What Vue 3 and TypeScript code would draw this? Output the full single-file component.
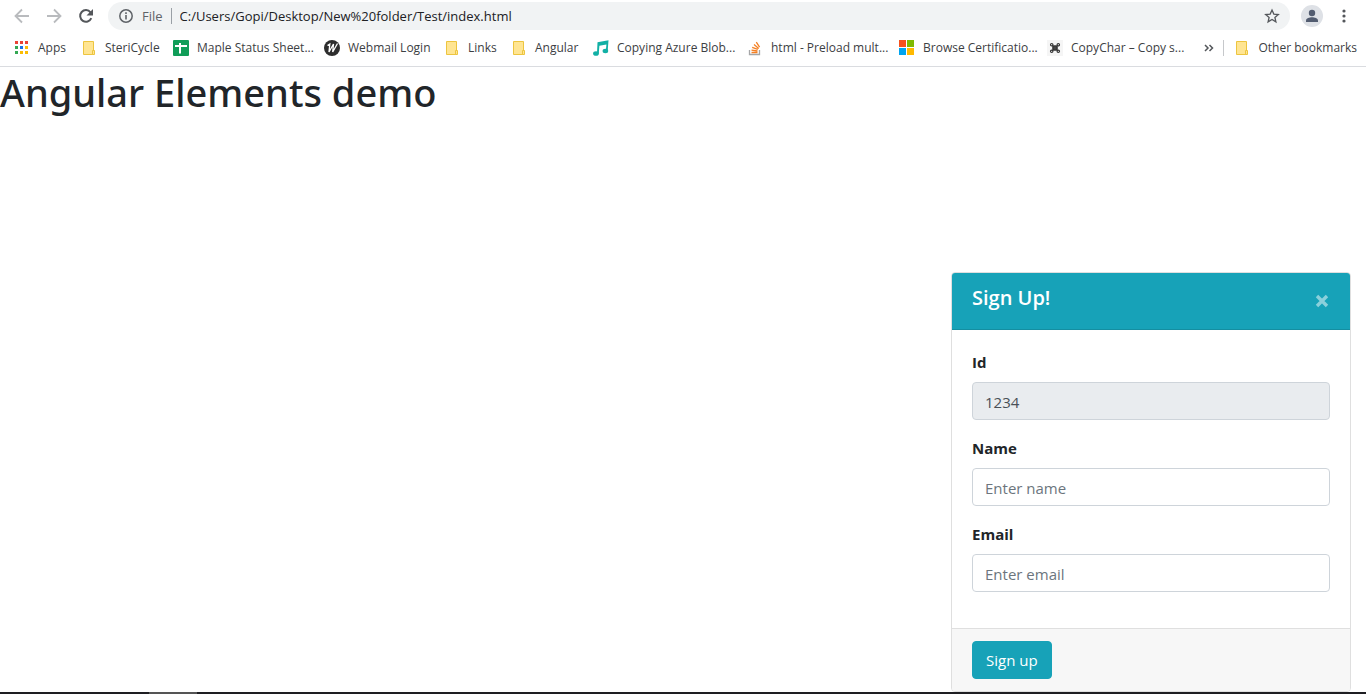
<script setup lang="ts">
import { ref } from 'vue'

type IconName = 'apps' | 'folder' | 'sheet' | 'webmail' | 'music' | 'stack' | 'windows' | 'command'

interface Bookmark {
  icon: IconName
  label: string
}

const bookmarks: Bookmark[] = [
  { icon: 'apps', label: 'Apps' },
  { icon: 'folder', label: 'SteriCycle' },
  { icon: 'sheet', label: 'Maple Status Sheet...' },
  { icon: 'webmail', label: 'Webmail Login' },
  { icon: 'folder', label: 'Links' },
  { icon: 'folder', label: 'Angular' },
  { icon: 'music', label: 'Copying Azure Blob...' },
  { icon: 'stack', label: 'html - Preload mult...' },
  { icon: 'windows', label: 'Browse Certificatio...' },
  { icon: 'command', label: 'CopyChar – Copy s...' },
]

const appDots = ['#ea4335', '#ea4335', '#ea4335', '#34a853', '#1a73e8', '#fbbc04', '#34a853', '#fbbc04', '#fbbc04']

const url = ref('C:/Users/Gopi/Desktop/New%20folder/Test/index.html')
const id = ref('1234')
const name = ref('')
const email = ref('')
</script>

<template>
  <div class="page">
    <header class="browser">
      <div class="toolbar">
        <button class="tool" type="button" aria-label="Back">
          <svg width="16" height="16" viewBox="0 0 16 16" fill="none" stroke="#b9bbbe" stroke-width="1.800"><path d="M15 8H2M8 1.500 1.500 8 8 14.500" /></svg>
        </button>
        <button class="tool" type="button" aria-label="Forward">
          <svg width="16" height="16" viewBox="0 0 16 16" fill="none" stroke="#b9bbbe" stroke-width="1.800"><path d="M1 8h13M8 1.500 14.500 8 8 14.500" /></svg>
        </button>
        <button class="tool" type="button" aria-label="Reload">
          <svg width="16" height="16" viewBox="0 0 16 16"><path d="M13.300 10.200A5.800 5.800 0 1 1 12.500 4.300" fill="none" stroke="#54575b" stroke-width="2" /><path d="M15 1v6.500H8.500z" fill="#54575b" /></svg>
        </button>
        <div class="address">
          <svg width="14" height="14" viewBox="0 0 14 14"><circle cx="7" cy="7" r="6.200" fill="none" stroke="#5f6368" stroke-width="1.500" /><path d="M7 6v4.500M7 3.300v1.600" stroke="#5f6368" stroke-width="1.600" /></svg>
          <span class="scheme">File</span>
          <input v-model="url" class="url" type="text" aria-label="Address" spellcheck="false" />
          <button class="star" type="button" aria-label="Bookmark this page">
            <svg width="16" height="16" viewBox="0 0 16 16"><path d="m8 2 1.800 4.100 4.500.4-3.400 2.900 1 4.400L8 11.500l-3.900 2.300 1-4.400-3.400-2.900 4.500-.4z" fill="none" stroke="#54575b" stroke-width="1.300" /></svg>
          </button>
        </div>
        <button class="profile" type="button" aria-label="Profile">
          <svg width="22" height="22" viewBox="0 0 22 22"><circle cx="11" cy="11" r="11" fill="#dee1e6" /><circle cx="11" cy="8" r="3.200" fill="#525c70" /><path d="M5 17v-1.500c0-2.200 3.500-3.300 6-3.300s6 1.100 6 3.300V17z" fill="#525c70" /></svg>
        </button>
        <button class="menu" type="button" aria-label="Menu">
          <svg width="4" height="14" viewBox="0 0 4 14" fill="#54575b"><circle cx="2" cy="2" r="1.600" /><circle cx="2" cy="7" r="1.600" /><circle cx="2" cy="12" r="1.600" /></svg>
        </button>
      </div>

      <nav class="bookmarks" aria-label="Bookmarks">
        <div class="list">
          <a v-for="item in bookmarks" :key="item.label" class="bookmark" href="#">
            <svg v-if="item.icon === 'apps'" width="16" height="16" viewBox="0 0 16 16">
              <rect v-for="(dot, i) in appDots" :key="i" :x="1 + (i % 3) * 5" :y="1 + Math.floor(i / 3) * 5" width="3" height="3" :fill="dot" />
            </svg>
            <svg v-else-if="item.icon === 'folder'" width="16" height="16" viewBox="0 0 16 16" fill="#ffe592" stroke="#edc53f"><path d="M2.500 1.500h10v13h-10z" /><path d="M11.500 10.500h2v4h-2z" /></svg>
            <svg v-else-if="item.icon === 'sheet'" width="16" height="16" viewBox="0 0 16 16"><rect width="16" height="16" rx="1" fill="#109d58" /><path d="M2 6h12M7 3v10.500" stroke="#fff" stroke-width="2" /></svg>
            <svg v-else-if="item.icon === 'webmail'" width="16" height="16" viewBox="0 0 16 16"><circle cx="8" cy="8" r="8" fill="#2d2d2d" /><path d="M3.500 5.500 5.800 4 5 12l4.500-8-.8 8L13.500 3.500" fill="none" stroke="#fff" stroke-width="1.300" /></svg>
            <svg v-else-if="item.icon === 'music'" width="16" height="16" viewBox="0 0 16 16" fill="#12b0a5"><path d="M4.500 2.200 15.500.3 14.700 11h-1.900l.6-6.500-7 1.200L5.800 13H4z" /><ellipse cx="3" cy="13.500" rx="2.900" ry="2.300" /><ellipse cx="12.400" cy="11" rx="2.800" ry="2.200" /></svg>
            <svg v-else-if="item.icon === 'stack'" width="16" height="16" viewBox="0 0 16 16" fill="none"><path d="M2.500 10v4.500h10V10" stroke="#a5a6a8" stroke-width="1.300" /><path d="M4.500 12.500h6M4.500 10.200l6 .8M5.200 7.300l5.600 2M7 4.500l4.700 4M9.300 2.200l3.300 5" stroke="#f48024" stroke-width="1.300" /></svg>
            <svg v-else-if="item.icon === 'windows'" width="16" height="16" viewBox="0 0 16 16"><path d="M0 0h7v7H0z" fill="#f6511d" /><path d="M8 0h7v7H8z" fill="#7fba00" /><path d="M0 8h7v7H0z" fill="#00a4ef" /><path d="M8 8h7v7H8z" fill="#ffb900" /></svg>
            <svg v-else width="16" height="16" viewBox="0 0 16 16"><path d="M0 0h16v16H0z" fill="#f5f5f5" /><path d="M5.500 5.500h5v5h-5z" fill="#444" /><g fill="none" stroke="#333" stroke-width="1.200"><path d="M6 6v4h4V6z" /><circle cx="4.700" cy="4.700" r="1.200" /><circle cx="11.300" cy="4.700" r="1.200" /><circle cx="4.700" cy="11.300" r="1.200" /><circle cx="11.300" cy="11.300" r="1.200" /></g></svg>
            <span>{{ item.label }}</span>
          </a>
        </div>
        <button class="more" type="button" aria-label="More bookmarks">
          <svg width="10" height="8" viewBox="0 0 10 8" fill="none" stroke="#54575b" stroke-width="1.500"><path d="m1 1 3 3-3 3M5.500 1l3 3-3 3" /></svg>
        </button>
        <a class="bookmark other" href="#">
          <svg width="16" height="16" viewBox="0 0 16 16" fill="#ffe592" stroke="#edc53f"><path d="M2.500 1.500h10v13h-10z" /><path d="M11.500 10.500h2v4h-2z" /></svg>
          <span>Other bookmarks</span>
        </a>
      </nav>
    </header>

    <main class="content">
      <h1>Angular Elements demo</h1>

      <form class="card" @submit.prevent>
        <div class="card-header">
          <h5>Sign Up!</h5>
          <button class="close" type="button" aria-label="Close">
            <svg width="14" height="14" viewBox="0 0 14 14" stroke="#8bd0db" stroke-width="3.400"><path d="m2 2 10 10M12 2 2 12" /></svg>
          </button>
        </div>
        <div class="card-body">
          <div class="group">
            <label for="id">Id</label>
            <input id="id" v-model="id" type="text" readonly />
          </div>
          <div class="group">
            <label for="name">Name</label>
            <input id="name" v-model="name" type="text" placeholder="Enter name" />
          </div>
          <div class="group">
            <label for="email">Email</label>
            <input id="email" v-model="email" type="email" placeholder="Enter email" />
          </div>
        </div>
        <div class="card-footer">
          <button class="submit" type="submit">Sign up</button>
        </div>
      </form>
    </main>

    <div class="taskbar"><span class="active"></span></div>
  </div>
</template>

<style>
body {
  margin: 0;
  background: #fff;
}
</style>

<style scoped>
* {
  box-sizing: border-box;
}

.page {
  display: flex;
  flex-direction: column;
  min-height: 100vh;
  color: #212529;
  font: 15px/24px "Segoe UI", "Open Sans", "Noto Sans", sans-serif;
}

button {
  padding: 0;
  border: 0;
  background: none;
  font: inherit;
  cursor: pointer;
}

svg {
  display: block;
  flex: none;
}

.browser {
  border-bottom: 1px solid #dadce0;
}

.toolbar {
  display: flex;
  align-items: center;
  height: 32px;
  padding: 0 20px 0 14px;
}

.tool {
  width: 16px;
  margin-right: 16px;
}

.address {
  display: flex;
  flex: 1;
  align-items: center;
  height: 28px;
  margin: 0 11px 0 -2px;
  padding: 0 10px 0 11px;
  border-radius: 14px;
  background: #f1f3f4;
  font-size: 13px;
}

.scheme {
  margin-left: 9px;
  padding-right: 8px;
  border-right: 1px solid #9aa0a6;
  color: #5f6368;
  line-height: 16px;
}

.url {
  flex: 1;
  min-width: 0;
  padding: 0 8px;
  border: 0;
  outline: 0;
  background: none;
  color: #202124;
  font: inherit;
}

.profile {
  margin-right: 19px;
}

.bookmarks {
  display: flex;
  align-items: center;
  height: 34px;
  padding: 0 9px 2px 14px;
}

.list {
  display: grid;
  flex: 1;
  grid-template-columns: 67px 92px 151px 120px 67px 82px 154px 152px 148px auto;
  min-width: 0;
}

.bookmark {
  display: flex;
  align-items: center;
  gap: 8px;
  color: #3c4043;
  font-size: 12px;
  line-height: 16px;
  text-decoration: none;
  white-space: nowrap;
}

.more {
  margin-right: 9px;
}

.other {
  padding-left: 10px;
  border-left: 1px solid #c6c8cb;
}

.content {
  display: flex;
  flex: 1;
  flex-direction: column;
  justify-content: space-between;
}

h1 {
  margin: 0 0 8px;
  font-family: "Segoe UI", "Noto Sans", "Open Sans", sans-serif;
  font-size: 38px;
  font-weight: 500;
  line-height: 50px;
}

.card {
  align-self: flex-end;
  width: 400px;
  max-width: 100%;
  margin-right: 15px;
  overflow: hidden;
  border: 1px solid #dfdfdf;
  border-radius: 4px;
}

.card-header {
  display: flex;
  align-items: flex-start;
  justify-content: space-between;
  padding: 12px 20px;
  border-bottom: 1px solid #148ea1;
  background: #17a2b8;
}

h5 {
  margin: 0;
  color: #fff;
  font-size: 20px;
  font-weight: 600;
  line-height: 26px;
}

.close {
  padding: 9px 1px;
}

.card-body {
  padding: 20px 20px 36px;
}

.group + .group {
  margin-top: 16px;
}

label {
  display: block;
  margin-bottom: 8px;
  font-weight: 700;
}

.group input {
  display: block;
  width: 100%;
  height: 38px;
  padding: 7px 12px 5px;
  border: 1px solid #ced4da;
  border-radius: 4px;
  background: #fff;
  color: #495057;
  font: inherit;
}

.group input[readonly] {
  background: #e9ecef;
}

.group input::placeholder {
  color: #6c757d;
  opacity: 1;
}

.card-footer {
  padding: 12px 20px;
  border-top: 1px solid #dfdfdf;
  background: #f7f7f7;
}

.submit {
  display: block;
  height: 38px;
  padding: 0 13px;
  border: 1px solid #17a2b8;
  border-radius: 4px;
  background: #17a2b8;
  color: #fff;
}

.taskbar {
  height: 2px;
  padding-left: 149px;
  background: #1e1e22;
}

.active {
  display: block;
  width: 48px;
  height: 2px;
  background: #555;
}
</style>
